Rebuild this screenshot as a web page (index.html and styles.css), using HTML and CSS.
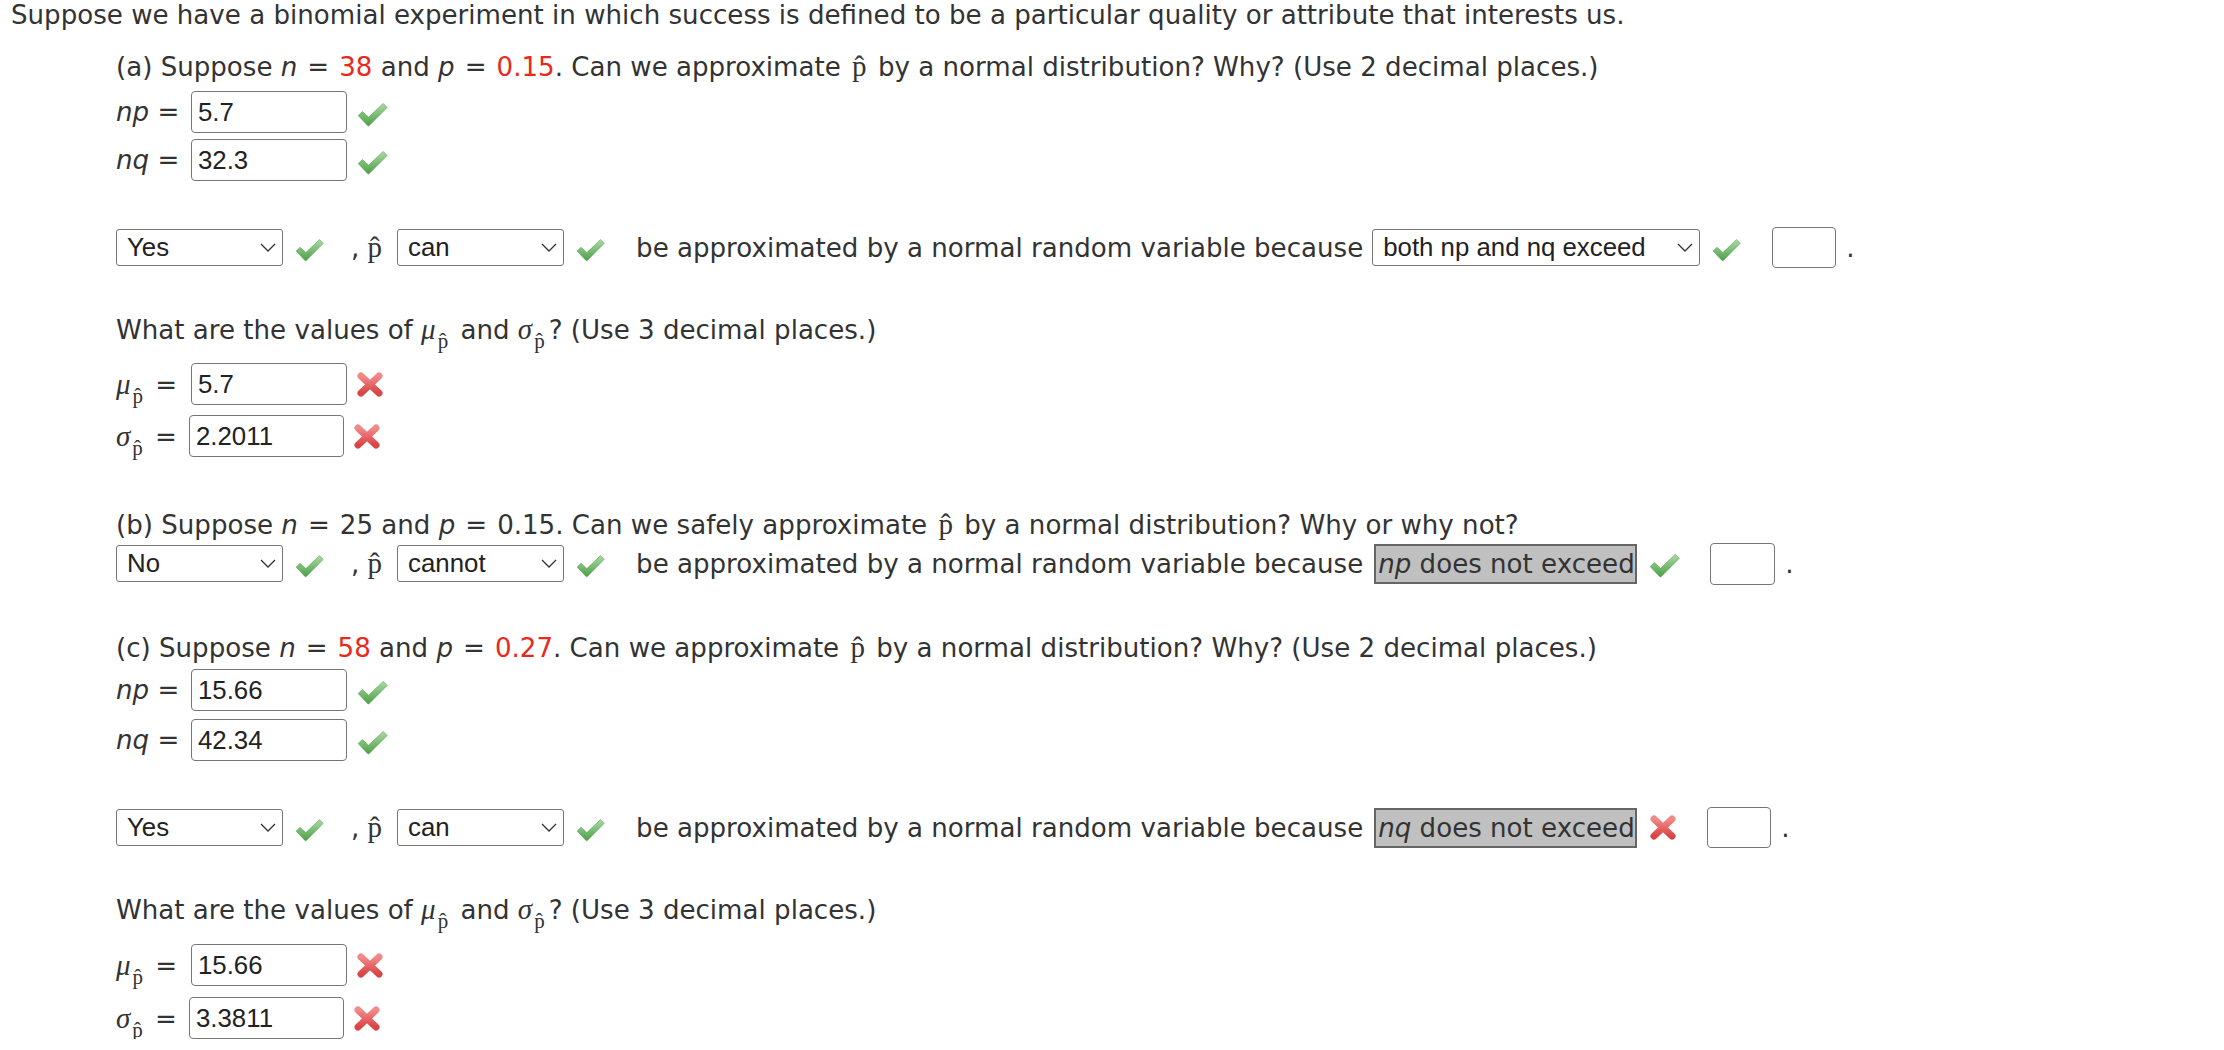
FILE: index.html
```html
<!DOCTYPE html>
<html lang="en">
<head>
<meta charset="utf-8">
<title>Binomial approximation</title>
<link rel="stylesheet" href="styles.css">
</head>
<body>
<svg class="defs" width="0" height="0" aria-hidden="true">
  <defs>
    <linearGradient id="gck" x1="0" y1="0" x2="0" y2="1">
      <stop offset="0" stop-color="#a9dca2"/>
      <stop offset="1" stop-color="#4c9f47"/>
    </linearGradient>
    <linearGradient id="gx" x1="0" y1="0" x2="0" y2="1">
      <stop offset="0" stop-color="#f28a8a"/>
      <stop offset="1" stop-color="#d94444"/>
    </linearGradient>
    <symbol id="ck" viewBox="0 0 31 25">
      <path d="M1.2 13.6 L5.4 9.6 L11.6 15.2 L26.2 1.4 L30.2 5.4 L12.2 23.6 Q11.4 24.3 10.6 23.6 Z" fill="url(#gck)" stroke="#5a9e55" stroke-width="0.6" stroke-linejoin="round"/>
    </symbol>
    <symbol id="xx" viewBox="0 0 28 27">
      <path d="M5 5 L23 22 M23 5 L5 22" stroke="url(#gx)" stroke-width="7" stroke-linecap="round" fill="none"/>
    </symbol>
    <symbol id="chev" viewBox="0 0 16 9">
      <path d="M1 1 L8 8 L15 1" stroke="#333" stroke-width="1.3" fill="none"/>
    </symbol>
  </defs>
</svg>

<div class="page">
  <p class="intro">Suppose we have a binomial experiment in which success is defined to be a particular quality or attribute that interests us.</p>

  <div class="part">
    <div class="line mt21">(a) Suppose <i>n</i><span class="eq">=</span><span class="red">38</span> and <i>p</i><span class="eq">=</span><span class="red">0.15</span>. Can we approximate <span class="m hat">p̂</span> by a normal distribution? Why? (Use 2 decimal places.)</div>

    <div class="field mt10">
      <span class="lbl"><i>np</i> =</span>
      <span class="inp">5.7</span>
      <svg class="ic-ck"><use href="#ck"/></svg>
    </div>
    <div class="field mt6">
      <span class="lbl"><i>nq</i> =</span>
      <span class="inp">32.3</span>
      <svg class="ic-ck"><use href="#ck"/></svg>
    </div>

    <div class="choice mt46">
      <span class="sel sel-s">Yes<svg class="chev"><use href="#chev"/></svg></span>
      <svg class="ic-ck after-sel"><use href="#ck"/></svg>
      <span class="phat">, <span class="m">p̂</span></span>
      <span class="sel sel-s">can<svg class="chev"><use href="#chev"/></svg></span>
      <svg class="ic-ck after-sel"><use href="#ck"/></svg>
      <span class="because">be approximated by a normal random variable because</span>
      <span class="sel sel-l">both np and nq exceed<svg class="chev"><use href="#chev"/></svg></span>
      <svg class="ic-ck after-sel"><use href="#ck"/></svg>
      <span class="blank"></span>
      <span class="dot">.</span>
    </div>

    <div class="line mt46">What are the values of <span class="m mi">μ</span><span class="sub">p̂</span> and <span class="m mi">σ</span><span class="sub">p̂</span>? (Use 3 decimal places.)</div>

    <div class="field mt19">
      <span class="lbl"><span class="m mi">μ</span><span class="sub">p̂</span> =</span>
      <span class="inp">5.7</span>
      <svg class="ic-x"><use href="#xx"/></svg>
    </div>
    <div class="field mt10">
      <span class="lbl lbl-n"><span class="m mi">σ</span><span class="sub">p̂</span> =</span>
      <span class="inp inp-n">2.2011</span>
      <svg class="ic-x"><use href="#xx"/></svg>
    </div>

    <div class="line mt52">(b) Suppose <i>n</i><span class="eq">=</span>25 and <i>p</i><span class="eq">=</span>0.15. Can we safely approximate <span class="m hat">p̂</span> by a normal distribution? Why or why not?</div>

    <div class="choice mt4">
      <span class="sel sel-s">No<svg class="chev"><use href="#chev"/></svg></span>
      <svg class="ic-ck after-sel"><use href="#ck"/></svg>
      <span class="phat">, <span class="m">p̂</span></span>
      <span class="sel sel-s">cannot<svg class="chev"><use href="#chev"/></svg></span>
      <svg class="ic-ck after-sel"><use href="#ck"/></svg>
      <span class="because">be approximated by a normal random variable because</span>
      <span class="answer"><i>np</i> does not exceed</span>
      <svg class="ic-ck after-ans"><use href="#ck"/></svg>
      <span class="blank blank-b"></span>
      <span class="dot">.</span>
    </div>

    <div class="line mt48">(c) Suppose <i>n</i><span class="eq">=</span><span class="red">58</span> and <i>p</i><span class="eq">=</span><span class="red">0.27</span>. Can we approximate <span class="m hat">p̂</span> by a normal distribution? Why? (Use 2 decimal places.)</div>

    <div class="field mt7">
      <span class="lbl"><i>np</i> =</span>
      <span class="inp">15.66</span>
      <svg class="ic-ck"><use href="#ck"/></svg>
    </div>
    <div class="field mt8">
      <span class="lbl"><i>nq</i> =</span>
      <span class="inp">42.34</span>
      <svg class="ic-ck"><use href="#ck"/></svg>
    </div>

    <div class="choice mt46">
      <span class="sel sel-s">Yes<svg class="chev"><use href="#chev"/></svg></span>
      <svg class="ic-ck after-sel"><use href="#ck"/></svg>
      <span class="phat">, <span class="m">p̂</span></span>
      <span class="sel sel-s">can<svg class="chev"><use href="#chev"/></svg></span>
      <svg class="ic-ck after-sel"><use href="#ck"/></svg>
      <span class="because">be approximated by a normal random variable because</span>
      <span class="answer"><i>nq</i> does not exceed</span>
      <svg class="ic-x after-ans"><use href="#xx"/></svg>
      <span class="blank blank-c"></span>
      <span class="dot">.</span>
    </div>

    <div class="line mt46">What are the values of <span class="m mi">μ</span><span class="sub">p̂</span> and <span class="m mi">σ</span><span class="sub">p̂</span>? (Use 3 decimal places.)</div>

    <div class="field mt20">
      <span class="lbl"><span class="m mi">μ</span><span class="sub">p̂</span> =</span>
      <span class="inp">15.66</span>
      <svg class="ic-x"><use href="#xx"/></svg>
    </div>
    <div class="field mt11">
      <span class="lbl lbl-n"><span class="m mi">σ</span><span class="sub">p̂</span> =</span>
      <span class="inp inp-n">3.3811</span>
      <svg class="ic-x"><use href="#xx"/></svg>
    </div>
  </div>
</div>
</body>
</html>
```

FILE: styles.css
```css
* { box-sizing: border-box; }

html, body {
  margin: 0;
  background: #ffffff;
}

body {
  color: #333333;
  font-family: "DejaVu Sans", Verdana, sans-serif;
  font-size: 26.1px;
}

.defs { position: absolute; width: 0; height: 0; overflow: hidden; }

.page { padding-left: 11px; }

.intro {
  margin: 0;
  height: 30px;
  line-height: 30px;
  white-space: nowrap;
}

.part { padding-left: 105px; }

.line {
  height: 30px;
  line-height: 30px;
  white-space: nowrap;
}

.red { color: #e8291c; }

.eq { margin: 0 10px; }

.m {
  font-family: "Liberation Serif", "Times New Roman", serif;
  font-size: 29px;
  font-style: normal;
}
.mi { font-style: italic; }
.hat { margin: 0 3px; }

.sub {
  font-family: "Liberation Serif", "Times New Roman", serif;
  font-size: 21px;
  line-height: 0;
  vertical-align: -9px;
  margin-left: 2px;
  margin-right: 4px;
}

/* vertical rhythm */
.mt4 { margin-top: 4px; }
.mt6 { margin-top: 6px; }
.mt7 { margin-top: 7px; }
.mt8 { margin-top: 8px; }
.mt10 { margin-top: 10px; }
.mt11 { margin-top: 11px; }
.mt19 { margin-top: 19px; }
.mt20 { margin-top: 20px; }
.mt21 { margin-top: 21px; }
.mt46 { margin-top: 46px; }
.mt48 { margin-top: 48px; }
.mt52 { margin-top: 52px; }

/* numeric field rows */
.field {
  display: flex;
  align-items: center;
  height: 42px;
  white-space: nowrap;
}

.lbl {
  width: 75px;
  flex: none;
  line-height: 30px;
}
.lbl-n { width: 73px; }

.inp {
  display: flex;
  align-items: center;
  width: 156px;
  height: 42px;
  padding-left: 6px;
  border: 1.5px solid #767676;
  border-radius: 4px;
  font-family: "Liberation Sans", Arial, sans-serif;
  font-size: 25.8px;
  color: #222222;
  flex: none;
}
.inp-n { width: 155px; }

.ic-ck {
  width: 31px;
  height: 25px;
  margin-left: 10px;
  margin-top: 5px;
  flex: none;
}

.ic-x {
  width: 28px;
  height: 27px;
  margin-left: 9px;
  flex: none;
}

/* choice rows */
.choice {
  display: flex;
  align-items: center;
  height: 41px;
  white-space: nowrap;
}

.sel {
  position: relative;
  display: flex;
  align-items: center;
  height: 37px;
  padding-left: 10px;
  border: 1.5px solid #767676;
  border-radius: 3px;
  font-family: "Liberation Sans", Arial, sans-serif;
  font-size: 25.8px;
  color: #222222;
  flex: none;
}
.sel-s { width: 167px; }
.sel-l { width: 328px; margin-left: 9px; }

.chev {
  position: absolute;
  right: 6px;
  top: 13px;
  width: 16px;
  height: 9px;
}

.ic-ck.after-sel { margin-left: 12px; margin-top: 4px; width: 29px; height: 24px; }
.ic-ck.after-ans { margin-left: 12px; margin-top: 4px; }
.ic-x.after-ans { margin-left: 12px; }

.phat {
  margin-left: 27px;
  margin-right: 15px;
  line-height: 30px;
}

.because { margin-left: 31px; }

.answer {
  display: block;
  width: 263px;
  height: 40px;
  line-height: 36px;
  margin-left: 11px;
  padding-left: 2px;
  background: #c0c0c0;
  border: 2px solid #666666;
  flex: none;
}

.blank {
  width: 64px;
  height: 41px;
  margin-left: 31px;
  border: 1.5px solid #767676;
  border-radius: 4px;
  flex: none;
}
.blank-b { margin-left: 30px; width: 65px; height: 42px; }
.blank-c { margin-left: 30px; height: 41px; }

.dot { margin-left: 10px; }
```
